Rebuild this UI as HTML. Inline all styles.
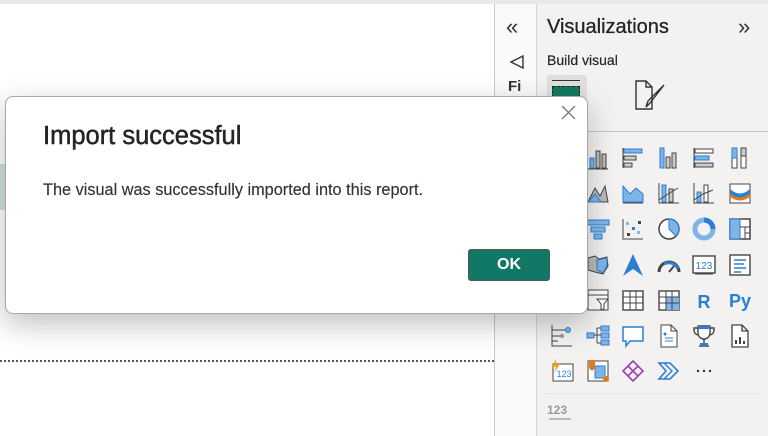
<!DOCTYPE html>
<html><head><meta charset="utf-8"><style>
*{margin:0;padding:0;box-sizing:border-box}
body{width:768px;height:436px;overflow:hidden;position:relative;background:#fff;font-family:"Liberation Sans",sans-serif}
.a{position:absolute}
svg.i{position:absolute;width:26px;height:26px}
</style></head><body>
<div class="a" style="left:0;top:0;width:768px;height:4px;background:#e8e8e8"></div>
<div class="a" style="left:0;top:164px;width:5px;height:46px;background:#cfe6d8"></div>
<div class="a" style="left:0;top:360px;width:494px;border-top:2px dotted #555"></div>
<div class="a" style="left:494px;top:4px;width:1px;height:432px;background:#c8c8c8"></div>
<div class="a" style="left:495px;top:4px;width:41px;height:432px;background:#fafafa"></div>
<div class="a" style="left:536px;top:4px;width:1px;height:432px;background:#d6d6d6"></div>
<div class="a" style="left:537px;top:4px;width:231px;height:432px;background:#f3f2f1"></div>
<div class="a" style="left:506px;top:14px;font-size:22px;color:#333">«</div>
<svg class="a" style="left:509px;top:54px" width="16" height="16" viewBox="0 0 16 16"><path d="M2 8 L14 2 V14 Z" fill="none" stroke="#333" stroke-width="1.4"/></svg>
<div class="a" style="left:508px;top:78px;font-size:15px;font-weight:bold;color:#333">Fi</div>
<div class="a" style="left:547px;top:16px;font-size:20px;color:#252423;-webkit-text-stroke:0.3px #252423">Visualizations</div>
<div class="a" style="left:738px;top:14px;font-size:22px;color:#333">»</div>
<div class="a" style="left:547px;top:52px;font-size:14px;color:#252423;-webkit-text-stroke:0.2px #252423">Build visual</div>
<div class="a" style="left:547px;top:75px;width:40px;height:28px;background:#e1dfdd;border-radius:3px"></div>
<div class="a" style="left:552px;top:80px;width:28px;height:1px;background:#333"></div>
<div class="a" style="left:552px;top:86px;width:28px;height:12px;background:#137a5f;border:1px dashed #222"></div>
<svg class="a" style="left:634px;top:79px" width="34" height="32" viewBox="0 0 34 32"><path d="M2 2 H12 L18 8 V30 H2 Z M12 2 V8 H18" fill="none" stroke="#333" stroke-width="1.4"/><path d="M30 6 L16 24 L12 28 L14 22 Z" fill="none" stroke="#333" stroke-width="1.4"/></svg>
<div class="a" style="left:540px;top:131px;width:228px;height:1px;background:#c8c6c4"></div>
<div class="a" style="left:544px;top:393px;width:220px;border-top:1px dotted #ddd"></div>

<div id="icons"></div>

<div class="a" style="left:547px;top:403px;font-size:12px;font-weight:bold;color:#999">123</div>
<div class="a" style="left:549px;top:418px;width:22px;height:2px;background:#bbb"></div>

<div class="a" style="left:5px;top:96px;width:583px;height:218px;background:#fff;border:1px solid #a8a8a8;border-radius:8px;box-shadow:0 10px 30px rgba(0,0,0,0.25)"></div>
<div class="a" style="left:43px;top:122px;font-size:25.5px;color:#252423;-webkit-text-stroke:0.5px #252423">Import successful</div>
<div class="a" style="left:43px;top:181px;font-size:16.3px;color:#333;-webkit-text-stroke:0.15px #333">The visual was successfully imported into this report.</div>
<svg class="a" style="left:561px;top:105px" width="15" height="15" viewBox="0 0 15 15"><path d="M1 1 L14 14 M14 1 L1 14" stroke="#777" stroke-width="1.3"/></svg>
<div class="a" style="left:468px;top:249px;width:82px;height:32px;background:#117865;border:1px solid #555;border-radius:3px;color:#fff;font-size:16px;font-weight:bold;text-align:center;line-height:30px">OK</div>

<script>
var B='#2a7fd4',L='#7fb5e6',G='#444',Gr='#999';
var ic=[
[[598,158],'<rect x="5" y="13" width="4" height="10" fill="'+L+'" stroke="'+B+'"/><rect x="11" y="6" width="4" height="17" fill="#bbb" stroke="'+G+'"/><rect x="17" y="9" width="4" height="14" fill="#bbb" stroke="'+G+'"/><path d="M3 24H23" stroke="'+G+'"/>'],
[[633,158],'<path d="M3 3V23" stroke="'+G+'"/><rect x="4" y="4" width="18" height="4" fill="'+L+'" stroke="'+B+'"/><rect x="4" y="11" width="12" height="4" fill="#ccc" stroke="'+G+'"/><rect x="4" y="18" width="8" height="4" fill="#ccc" stroke="'+G+'"/>'],
[[669,158],'<rect x="4" y="3" width="4" height="20" fill="'+L+'" stroke="'+B+'"/><rect x="10" y="12" width="4" height="11" fill="#ccc" stroke="'+G+'"/><rect x="16" y="8" width="4" height="15" fill="#ccc" stroke="'+G+'"/>'],
[[704,158],'<path d="M3 3V23" stroke="'+G+'"/><rect x="4" y="4" width="18" height="4" fill="#fff" stroke="'+G+'"/><rect x="4" y="11" width="14" height="4" fill="'+L+'" stroke="'+B+'"/><rect x="4" y="18" width="18" height="4" fill="#ccc" stroke="'+G+'"/>'],
[[740,158],'<rect x="5" y="3" width="5" height="20" fill="#fff" stroke="'+G+'"/><rect x="5" y="3" width="5" height="10" fill="'+L+'" stroke="'+B+'"/><rect x="14" y="3" width="5" height="20" fill="#fff" stroke="'+G+'"/><rect x="14" y="3" width="5" height="8" fill="#ccc" stroke="'+G+'"/>'],
[[598,193],'<path d="M3 22L10 8L15 16L20 6L23 22Z" fill="#bbb" stroke="'+G+'"/><path d="M3 22L10 14L16 22Z" fill="'+L+'" stroke="'+B+'"/>'],
[[633,193],'<path d="M3 22V6L10 14L16 8L23 14V22Z" fill="'+L+'" stroke="'+B+'"/><path d="M3 23H23" stroke="'+G+'"/>'],
[[669,193],'<rect x="6" y="5" width="4" height="17" fill="'+L+'" stroke="'+B+'"/><rect x="13" y="9" width="4" height="13" fill="#ccc" stroke="'+G+'"/><path d="M3 3V23H23 M3 20L12 14L22 8" fill="none" stroke="'+G+'"/>'],
[[704,193],'<rect x="6" y="12" width="4" height="10" fill="'+L+'" stroke="'+B+'"/><rect x="13" y="5" width="4" height="17" fill="#fff" stroke="'+G+'"/><path d="M3 3V23H23 M3 20L12 14L22 10" fill="none" stroke="'+G+'"/>'],
[[740,193],'<rect x="3" y="4" width="20" height="19" fill="#fff" stroke="'+G+'"/><path d="M3 9Q13 18 23 9V14Q13 22 3 14Z" fill="'+B+'"/><path d="M3 15Q13 23 23 15" stroke="#e07a1f" stroke-width="3" fill="none"/>'],
[[562,229],'<rect x="2" y="4" width="22" height="5" fill="'+L+'" stroke="'+B+'"/><rect x="6" y="11" width="14" height="5" fill="'+L+'" stroke="'+B+'"/><rect x="9" y="18" width="8" height="5" fill="'+L+'" stroke="'+B+'"/>'],
[[598,229],'<rect x="2" y="4" width="22" height="5" fill="'+L+'" stroke="'+B+'"/><rect x="6" y="11" width="14" height="5" fill="'+L+'" stroke="'+B+'"/><rect x="9" y="18" width="8" height="5" fill="'+L+'" stroke="'+B+'"/>'],
[[633,229],'<path d="M3 3V23H23" fill="none" stroke="'+G+'"/><rect x="6" y="6" width="3" height="3" fill="'+L+'"/><rect x="12" y="11" width="3" height="3" fill="'+B+'"/><rect x="18" y="5" width="3" height="3" fill="'+G+'"/><rect x="7" y="17" width="3" height="3" fill="'+G+'"/><rect x="17" y="15" width="3" height="3" fill="'+L+'"/>'],
[[669,229],'<circle cx="13" cy="13" r="10" fill="#fff" stroke="'+G+'" stroke-width="1.5"/><path d="M13 13V3A10 10 0 0 1 20 20Z" fill="'+L+'" stroke="'+B+'"/>'],
[[704,229],'<circle cx="13" cy="13" r="9" fill="none" stroke="'+L+'" stroke-width="5"/><path d="M13 4A9 9 0 0 1 22 13" stroke="'+B+'" stroke-width="5" fill="none"/>'],
[[740,229],'<rect x="3" y="3" width="20" height="20" fill="#fff" stroke="'+G+'" stroke-width="1.5"/><rect x="3" y="3" width="10" height="20" fill="'+L+'" stroke="'+B+'"/><path d="M13 11H23M18 11V23M18 17H23" stroke="'+G+'"/>'],
[[598,265],'<path d="M3 6L10 4L14 7L22 5L23 14L18 22L10 20L3 18Z" fill="#bbb" stroke="'+G+'"/><path d="M12 8L22 6L22 14L18 21L12 18Z" fill="'+L+'" stroke="'+B+'"/>'],
[[633,265],'<path d="M13 2L23 24L13 17L3 24Z" fill="'+B+'"/>'],
[[669,265],'<path d="M3 20A10 10 0 0 1 23 20" fill="none" stroke="'+G+'" stroke-width="3"/><path d="M8 12A10 10 0 0 1 22 17" fill="none" stroke="'+B+'" stroke-width="3"/><path d="M13 20L18 14" stroke="'+G+'" stroke-width="2"/>'],
[[704,265],'<rect x="2" y="4" width="22" height="17" fill="#fff" stroke="'+G+'" stroke-width="1.4"/><text x="13" y="17" font-size="10" text-anchor="middle" fill="'+B+'" font-family="Liberation Sans">123</text><path d="M4 22H22" stroke="'+G+'"/>'],
[[740,265],'<rect x="3" y="3" width="20" height="20" fill="#fff" stroke="'+G+'" stroke-width="1.4"/><path d="M7 8H19M7 12H17M7 16H19M7 20H14" stroke="'+B+'" stroke-width="1.6"/>'],
[[598,300],'<rect x="3" y="3" width="20" height="20" fill="#fff" stroke="'+G+'"/><path d="M3 8H23" stroke="'+G+'"/><path d="M12 12H23L19 17V23L16 22V17Z" fill="#fff" stroke="'+G+'"/>'],
[[633,300],'<rect x="3" y="4" width="20" height="19" fill="#fff" stroke="'+G+'" stroke-width="1.4"/><path d="M3 10H23M3 16H23M10 4V23M16 4V23" stroke="'+G+'"/>'],
[[669,300],'<rect x="3" y="4" width="20" height="19" fill="#fff" stroke="'+G+'" stroke-width="1.4"/><rect x="10" y="10" width="13" height="13" fill="'+L+'"/><path d="M3 10H23M3 16H23M10 4V23M16 4V23" stroke="'+G+'"/>'],
[[704,300],'<text x="13" y="21" font-size="18" font-weight="bold" text-anchor="middle" fill="'+B+'" font-family="Liberation Sans">R</text>'],
[[740,300],'<text x="13" y="20" font-size="18" font-weight="bold" text-anchor="middle" fill="'+B+'" font-family="Liberation Sans">Py</text>'],
[[562,336],'<path d="M3 2V23H23" fill="none" stroke="'+G+'"/><path d="M3 7H17M3 13H12M3 18H9" stroke="'+G+'"/><circle cx="19" cy="7" r="2.5" fill="'+L+'" stroke="'+B+'"/><circle cx="13" cy="13" r="2" fill="#999"/>'],
[[598,336],'<rect x="2" y="10" width="7" height="5" fill="'+L+'" stroke="'+B+'"/><rect x="16" y="3" width="8" height="5" fill="'+L+'" stroke="'+B+'"/><rect x="16" y="10" width="8" height="5" fill="'+L+'" stroke="'+B+'"/><rect x="16" y="17" width="8" height="5" fill="'+L+'" stroke="'+B+'"/><path d="M9 12H16M12 5V20M12 5H16M12 20H16" stroke="'+G+'"/>'],
[[633,336],'<path d="M3 4H23V18H10L6 23V18H3Z" fill="#fff" stroke="'+B+'" stroke-width="1.5"/>'],
[[669,336],'<path d="M5 2H15L21 8V24H5Z M15 2V8H21" fill="#fff" stroke="'+G+'"/><circle cx="9" cy="11" r="1.5" fill="'+B+'"/><path d="M9 15H17M9 18H17" stroke="'+B+'"/>'],
[[704,336],'<path d="M7 3H19V10A6 6 0 0 1 7 10Z" fill="#fff" stroke="'+G+'" stroke-width="1.4"/><path d="M7 5H3V8Q4 12 8 12M19 5H23V8Q22 12 18 12M13 16V20M8 23H18" fill="none" stroke="'+G+'" stroke-width="1.4"/><rect x="7" y="3" width="12" height="3" fill="'+B+'"/><rect x="9" y="20" width="8" height="3" fill="'+B+'"/>'],
[[740,336],'<path d="M5 2H15L21 8V24H5Z M15 2V8H21" fill="#fff" stroke="'+G+'" stroke-width="1.3"/><rect x="8" y="17" width="2" height="4" fill="'+G+'"/><rect x="12" y="14" width="2" height="7" fill="'+G+'"/><rect x="16" y="18" width="2" height="3" fill="'+G+'"/>'],
[[562,371],'<rect x="4" y="6" width="20" height="17" fill="#fff" stroke="'+G+'"/><text x="15" y="19" font-size="9" text-anchor="middle" fill="'+B+'" font-family="Liberation Sans">123</text><path d="M7 1L3 9H7L5 15L11 6H7Z" fill="#e8a21f"/>'],
[[598,371],'<rect x="3" y="3" width="20" height="20" fill="#fff" stroke="'+G+'"/><path d="M10 8H20V20H10Z" fill="'+L+'" stroke="'+B+'"/><path d="M4 2H10V10L7 13L4 10Z" fill="#e07a1f"/><circle cx="21" cy="21" r="3" fill="#e07a1f"/>'],
[[633,371],'<path d="M13 3L23 13L13 23L3 13Z M8 8L18 18 M18 8L8 18" fill="none" stroke="#9b3fb5" stroke-width="1.6"/>'],
[[669,371],'<path d="M3 5H14L22 13L14 21H3L10 13Z" fill="none" stroke="'+B+'" stroke-width="1.6"/><path d="M8 5L16 13L8 21" fill="none" stroke="'+B+'" stroke-width="1.4"/>'],
[[704,371],'<circle cx="7" cy="13" r="1.2" fill="#333"/><circle cx="13" cy="13" r="1.2" fill="#333"/><circle cx="19" cy="13" r="1.2" fill="#333"/>']
];
var h='';ic.forEach(function(c){h+='<svg class="i" style="left:'+(c[0][0]-13)+'px;top:'+(c[0][1]-13)+'px" viewBox="0 0 26 26">'+c[1]+'</svg>';});
document.getElementById('icons').innerHTML=h;
</script>
</body></html>
